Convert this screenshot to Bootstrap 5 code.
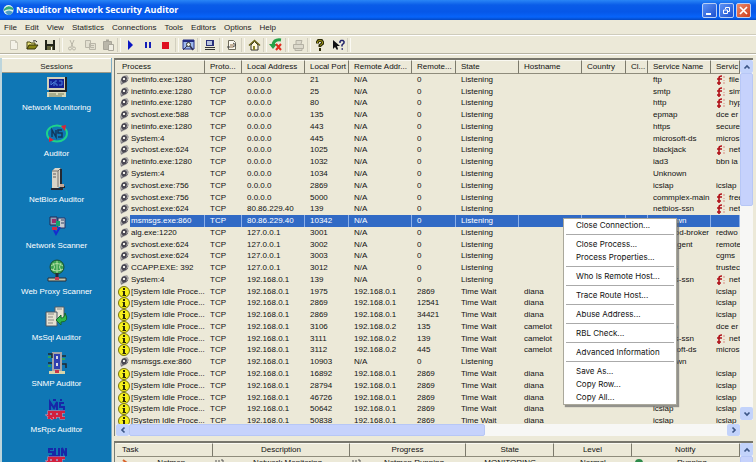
<!DOCTYPE html>
<html lang="en">
<head>
<meta charset="utf-8">
<meta name="viewport" content="width=device-width, initial-scale=1">
<title>Nsauditor Network Security Auditor</title>
<link href="https://cdn.jsdelivr.net/npm/bootstrap@5.3.0/dist/css/bootstrap.min.css" rel="stylesheet">
<style>
:root { --face: #ece9d8; --edge: #86836f; --pick: #316ac5; }
body { font: 8px/11px "Liberation Sans", Arial, sans-serif; color: #111; background: var(--face); }
button { font: inherit; color: inherit; border: 0; background: none; padding: 0; }
svg { display: block; flex: none; }
.titlebar { height: 20px; gap: 2px; padding: 0 5px 0 3px; color: #fff; font: bold 9px/18px "Open Sans", sans-serif; background: linear-gradient(#2a86f6, #0a5ce8 25%, #0657e8 60%, #0764fa 85%, #0348c4); }
.titlebar h1 { font: inherit; margin: 0; }
.win-btn { width: 15px; height: 15px; border: 1px solid #b8cff5; border-radius: 2px; background: linear-gradient(135deg, #5c92f5, #1d50cf); }
.win-close { background: linear-gradient(135deg, #ee8c6c, #cc3c1c); }
.menubar { height: 15px; padding-left: 4px; gap: 8px; border-bottom: 1px solid #cfccbc; }
.menubar a { color: #222; text-decoration: none; line-height: 13px; }
.toolbar { height: 19px; padding-left: 5px; border-top: 1px solid #fff; border-bottom: 1px solid #b6b3a2; }
.tool { width: 18px; height: 16px; display: grid; place-items: center; }
.rule { width: 4px; height: 14px; border-left: 1px solid #d2cfbf; border-right: 1px solid #faf9f3; background: var(--face); }
.workspace { padding: 3px 3px 0 0; border-top: 1px solid #fff; min-height: 0; }
.sidebar { width: 112px; background: #0f77b5; border-left: 2px solid #bcd5dc; border-right: 1px solid #7facc4; }
.sidebar h2 { font: inherit; margin: 0 0 2px; height: 15px; line-height: 15px; text-align: center; background: var(--face); border-top: 1px solid #fff; border-bottom: 1px solid #9b9987; color: #222; }
.session { height: 46px; color: #fff; text-decoration: none; }
.session svg { margin-bottom: 3px; }
.panes { display: grid; grid-template-rows: minmax(0, 1fr) 21px; gap: 5px; margin-left: 2px; }
.pane { border-left: 1px solid #777e78; border-top: 2px solid #77766c; padding-left: 2px; background: var(--face); position: relative; min-height: 0; }
.list-side { min-width: 0; }
.list-view { min-height: 0; }
.grid-table { width: 100%; table-layout: fixed; border-collapse: separate; border-spacing: 0; }
.grid-table th, .grid-table td { padding: 0 0 0 5px; overflow: hidden; white-space: nowrap; text-align: left; font-weight: normal; line-height: 10px; height: 10px; vertical-align: middle; }
.grid-table th { height: 14px; border-right: 1px solid #7c7a6c; border-bottom: 1px solid #8f8c7c; border-top: 1px solid #faf9f2; }
.connections { height: calc(100% + 3px); }
.connections td:first-child { padding-left: 1px; }
.proc { display: flex; align-items: center; height: 10px; }
.proc svg { margin-right: 1px; }
.proc span { flex: 1; }
.picked td { background: var(--pick); color: #fff; border-right: 1px solid #8cb0e8; }
.picked td:first-child { background: linear-gradient(90deg, var(--face) 13px, var(--pick) 13px); }
.svc { display: flex; align-items: center; gap: 4px; }
.scroll-v { width: 13px; background: #f7f7f5; }
.scroll-h { height: 12px; background: #f7f7f5; margin-left: -1px; }
.arrow { width: 13px; height: 13px; border-radius: 2px; background: #c3d3fb; display: grid; place-items: center; flex: none; }
.scroll-h .arrow { height: 12px; }
.to-left { rotate: -90deg; }
.to-right { rotate: 90deg; }
.to-bottom { rotate: 180deg; }
.thumb { background: #c6d2fc; border: 1px solid #b7c7f6; border-radius: 2px; }
.popup { position: absolute; left: 448px; top: 158px; width: 114px; background: #fff; border: 1px solid #aaa89b; box-shadow: 2px 2px 1px #666a; font: 8px/13px Inter, sans-serif; z-index: 3; }
.popup button { display: block; width: 100%; height: 13px; padding-left: 12px; text-align: left; color: #111; }
.popup hr { margin: 2px 2px 3px; border: 0; border-top: 1px solid #aaa; opacity: 1; }
.tasks th, .tasks td { text-align: center; padding: 0; }
.tasks th:first-child { text-align: left; padding-left: 5px; }
.tasks td { height: 12px; }
.tasks td > div { display: flex; align-items: center; }
.tasks td span { flex: 1; }
</style>
<script src="https://cdn.jsdelivr.net/npm/bootstrap@5.3.0/dist/js/bootstrap.bundle.min.js"></script>
</head>
<body class="vh-100 overflow-hidden d-flex flex-column">
<svg width="0" height="0" class="position-absolute" aria-hidden="true">
  <symbol id="gear" viewBox="0 0 12 12"><path d="M3 5 5 2l4-1 2 3-2 4-4 2-2 1-1-3Z" fill="#a5a3a3"/><path d="M4 3 7 2l2 2-1 4-3 1-2-3Z" fill="#4a4853"/><path d="M5 4h2v2H5Z" fill="#f0eee8"/><path d="M8 8l2-2M3 10l2-1" stroke="#77747c"/></symbol>
  <symbol id="info" viewBox="0 0 12 12"><circle cx="6" cy="6" r="5.500" fill="#f6f01c" stroke="#77740c"/><path d="M5 2h2v2H5ZM4.500 5H7v4h1v1H4.500V9H5V6h-.5Z" fill="#2b2a08"/></symbol>
  <symbol id="flag" viewBox="0 0 9 10"><path d="M3 10V3q0-2 3-2M1 4h5M1 8h4" stroke="#b01018" stroke-width="1.600" fill="none"/><path d="M8 1v2M8 5v1M7 8h2" stroke="#d98a80"/></symbol>
  <symbol id="up" viewBox="0 0 8 8"><path d="M1.500 5.500 4 3l2.500 2.500" fill="none" stroke="#3c5687" stroke-width="1.700"/></symbol>
</svg>

<header class="titlebar d-flex align-items-center flex-shrink-0">
  <svg width="11" height="12" viewBox="0 0 11 12"><circle cx="5.500" cy="6" r="5" fill="#e3f5ef"/><path d="M1 5q4-5 9-1v2q-5-2-9 1Z" fill="#35ad79"/><path d="M2 8q4-3 8 0-2 4-5 3Z" fill="#4b9bc5"/></svg>
  <h1 class="flex-grow-1">Nsauditor Network Security Auditor</h1>
  <button class="win-btn" aria-label="Minimize"><svg width="13" height="13"><path d="M3 9h5v2H3Z" fill="#fff"/></svg></button>
  <button class="win-btn" aria-label="Restore"><svg width="13" height="13" fill="none" stroke="#fff"><path d="M5.500 5V3.500h4v4H8M3.500 6h4v3.500h-4Z"/></svg></button>
  <button class="win-btn win-close" aria-label="Close"><svg width="13" height="13"><path d="m3 3 7 7m0-7-7 7" stroke="#fff" stroke-width="1.700"/></svg></button>
</header>

<nav class="menubar d-flex align-items-center flex-shrink-0">
  <a href="#">File</a><a href="#">Edit</a><a href="#">View</a><a href="#">Statistics</a><a href="#">Connections</a><a href="#">Tools</a><a href="#">Editors</a><a href="#">Options</a><a href="#">Help</a>
</nav>

<div class="toolbar d-flex align-items-center flex-shrink-0" role="toolbar" aria-label="Main">
  <button class="tool" aria-label="New"><svg width="12" height="12"><path d="M2.500 1.500h5l2 2v7h-7ZM7.500 1.500v2h2" fill="#f4f2e8" stroke="#c9c6b8"/></svg></button>
  <button class="tool" aria-label="Open"><svg width="13" height="12"><path d="M1 10V3h3l1 1h4v2" fill="#e8e17a" stroke="#45430d"/><path d="m1 10 2-4h9l-3 4Z" fill="#8a8613" stroke="#33310a"/><path d="M7 2q3-1 4 1" stroke="#222" fill="none"/></svg></button>
  <button class="tool" aria-label="Save"><svg width="12" height="12"><path d="M1 1h10v10H1Z" fill="#22241a"/><path d="M3 1h6v4H3Z" fill="#d9d8c2"/><path d="M3 7h6v4H3Z" fill="#66673f"/><path d="M7 8h1v3H7Z" fill="#fff"/></svg></button>
  <span class="rule"></span>
  <button class="tool" aria-label="Cut"><svg width="12" height="12" fill="none" stroke="#b9b6a8"><path d="m4 1 3 7M8 1 5 8"/><circle cx="4" cy="9.500" r="1.500"/><circle cx="8" cy="9.500" r="1.500"/></svg></button>
  <button class="tool" aria-label="Copy"><svg width="13" height="12" fill="#e2dfd0" stroke="#b9b6a8"><path d="M1.500 1.500h5v7h-5ZM5.500 4.500h6v6h-6ZM7 6.500h3M7 8.500h3"/></svg></button>
  <button class="tool" aria-label="Paste"><svg width="13" height="12" stroke="#a9a69a"><path d="M1.500 2.500h8v8h-8Z" fill="#bab7aa"/><path d="M4 1.500h3" stroke-width="2"/><path d="M6.500 5.500h5v6h-5Z" fill="#efede2"/></svg></button>
  <span class="rule"></span>
  <button class="tool" aria-label="Start"><svg width="10" height="12"><path d="M3 1v10l5-5Z" fill="#0a16c4"/></svg></button>
  <button class="tool" aria-label="Pause"><svg width="10" height="12"><path d="M2 3h2v6H2ZM6 3h2v6H6Z" fill="#141fb8"/></svg></button>
  <button class="tool" aria-label="Stop"><svg width="10" height="12"><path d="M1 3h7v7H1Z" fill="#df1020"/></svg></button>
  <span class="rule"></span>
  <button class="tool" aria-label="Find session"><svg width="13" height="12"><path d="M1 1h11v9H1Z" fill="#9db8ec" stroke="#232c85"/><path d="M1 1h11v2H1Z" fill="#232c85"/><circle cx="6.500" cy="5.500" r="2" fill="#e6ebdf" stroke="#333"/><path d="m8 7 3 4" stroke="#303050" stroke-width="1.500"/><path d="m5 7-4 4" stroke="#303050"/></svg></button>
  <span class="rule"></span>
  <button class="tool" aria-label="Monitor"><svg width="12" height="12"><path d="M2 1h8v6H2Z" fill="#2b317b"/><path d="M3 2h5v4H3Z" fill="#b9c4de"/><path d="M1 8h10v1H1ZM1 10h10v1H1Z" fill="#333"/></svg></button>
  <span class="rule"></span>
  <button class="tool" aria-label="Refresh log"><svg width="12" height="12"><path d="M2.500 1.500h5l2 2v7h-7Z" fill="#fcfaf0" stroke="#6e6b5c"/><path d="M4 6h4M4 8h3" stroke="#8c6a45"/><path d="m7 4 3 2-3 2M1 8h3" stroke="#444" fill="none"/></svg></button>
  <span class="rule"></span>
  <button class="tool" aria-label="Home"><svg width="13" height="12"><path d="M3 6v5h7V6L6.500 2.500Z" fill="#fff7dc" stroke="#333"/><path d="m1 6.500 5.500-5 5.500 5" fill="none" stroke="#6b6417" stroke-width="1.500"/><path d="M5 7h2v4H5Z" fill="#8c842a"/></svg></button>
  <span class="rule"></span>
  <button class="tool" aria-label="Disconnect"><svg width="14" height="13"><path d="M12 2Q5 1 4 7" fill="none" stroke="#24a047" stroke-width="3"/><path d="M0 6h8l-4 5Z" fill="#24a047"/><path d="m7 6 5 6m0-6-5 6" stroke="#df2d20" stroke-width="2"/></svg></button>
  <span class="rule"></span>
  <button class="tool" aria-label="Print"><svg width="13" height="12" fill="#dcd9cb" stroke="#b4b1a4"><path d="M4 5V1.500h6L9 5M1.500 5.500h10v4h-10ZM3 9.500h7v2H3Z"/></svg></button>
  <span class="rule"></span>
  <button class="tool" aria-label="About"><svg width="10" height="12" fill="none"><path d="M2.500 4.500V3l1-1.500h3L7.500 3v1.500L5 6.500V8M4 10.500h2" stroke="#2e2c08" stroke-width="3"/><path d="M2.500 4V3l1-1.300h3L7.500 3v1.500L5 6.500" stroke="#a8a01c"/></svg></button>
  <button class="tool" aria-label="Context help"><svg width="13" height="12"><path d="M1 1v9l2-2 2 3 1-1-1-3h3Z" fill="#111"/><path d="M8 4V2.500L9 1.500h2l1 1V4l-2 2v1.500M9.500 10h1.500" fill="none" stroke="#22236b" stroke-width="1.500"/></svg></button>
  <span class="rule"></span>
</div>

<main class="workspace d-flex flex-grow-1 overflow-hidden">
  <aside class="sidebar flex-shrink-0 overflow-hidden">
    <h2>Sessions</h2>
    <nav class="d-flex flex-column">
      <a class="session d-flex flex-column align-items-center flex-shrink-0" href="#"><svg width="24" height="24" viewBox="0 0 24 24"><path d="M2 2h19v13H2Z" fill="#d2d0b9"/><path d="M21 2v14H4" stroke="#222" stroke-width="2" fill="none"/><path d="M4 4h15v9H4Z" fill="#111f95"/><path d="M6 6v4l3-3v4m3-5h-2v3h2v2m2-5h3v4h-3" stroke="#4a80d8" fill="none"/><path d="M2 17h19v5H2Z" fill="#dad8b9"/><path d="M4 19h7M13 19h6M4 21h13" stroke="#77805e"/></svg>Network Monitoring</a>
      <a class="session d-flex flex-column align-items-center flex-shrink-0" href="#"><svg width="24" height="24" viewBox="0 0 24 24"><ellipse cx="12" cy="12.500" rx="10" ry="8" fill="none" stroke="#1ed38b" stroke-width="2"/><path d="M7 16V9l4 7V9m6 0h-4v3h4v4h-4" fill="none" stroke="#12385d" stroke-width="1.500"/><path d="m16 5 5-1-1 6ZM4 16l5 3-5 2Z" fill="#dc2435"/></svg>Auditor</a>
      <a class="session d-flex flex-column align-items-center flex-shrink-0" href="#"><svg width="24" height="24" viewBox="0 0 24 24"><path d="m7 4 3-3h6v18l-3 2H7Z" fill="#d9d4c8"/><path d="M13 4v16M7 4h6l3-3" stroke="#77716d" fill="none"/><path d="M16 2v18h4M6 22h12" stroke="#242832" stroke-width="2" fill="none"/><path d="M8 7h3M8 10h3" stroke="#5f5d60"/><path d="M15 17h4v3h-4Z" fill="#c3a796"/></svg>NetBios Auditor</a>
      <a class="session d-flex flex-column align-items-center flex-shrink-0" href="#"><svg width="24" height="24" viewBox="0 0 24 24"><path d="M5 4h7v8H5Z" fill="#929eb7" stroke="#222b53"/><path d="M13 5h7v10h-7Z" fill="#c8cbd1" stroke="#263769"/><path d="M7 6h4v4H7Z" fill="#9a2e69"/><path d="M11 8h4v5h-4Z" fill="#13a36b"/><path d="M16 7h3M16 10h3" stroke="#304365"/><path d="m15 14-4 7-2-4" fill="none" stroke="#162bd0" stroke-width="2"/><path d="M7 14h5v3H7Z" fill="#d12b45"/></svg>Network Scanner</a>
      <a class="session d-flex flex-column align-items-center flex-shrink-0" href="#"><svg width="24" height="24" viewBox="0 0 24 24"><circle cx="12" cy="8" r="7" fill="#3aa14f" stroke="#174d38"/><path d="M6 7q6-5 12 0M6 10q6 4 12 0M12 2v12M8 4q3 4 0 8m8-8q-3 4 0 8" stroke="#b1dfa2" fill="none"/><path d="M12 14v5" stroke="#252c35" stroke-width="3"/><path d="M3 19h18v3H3Z" fill="#c3c4aa" stroke="#29313b"/><path d="M10 18h4v3h-4Z" fill="#c63952"/></svg>Web Proxy Scanner</a>
      <a class="session d-flex flex-column align-items-center flex-shrink-0" href="#"><svg width="24" height="24" viewBox="0 0 24 24"><path d="M10 2h9v14h-9Z" fill="#e5e2d4" stroke="#525c65"/><path d="M1 7h11v14H1Z" fill="#e5e0d1" stroke="#485663"/><path d="M3 9h6M3 12h5M3 15h6M3 18h5M12 4h5" stroke="#8b8a83"/><path d="m11 15 5-5v3q4 0 4-5 5 9-4 9v3Z" fill="#31b849" stroke="#16692e"/></svg>MsSql Auditor</a>
      <a class="session d-flex flex-column align-items-center flex-shrink-0" href="#"><svg width="24" height="24" viewBox="0 0 24 24"><path d="M8 2h8v17H8Z" fill="#2f3fb0" stroke="#a5a4a8" stroke-width="2"/><path d="M11 5h2v3h-2ZM11 12h2v3h-2Z" fill="#d7d8e2"/><path d="M3 3h4v4M3 12h4M17 5h4M17 13h4v4" stroke="#202a32" stroke-width="1.500" fill="none"/><path d="M3 6h3M17 8h3M3 15h3" stroke="#30a25b" stroke-width="2"/><path d="M4 20h16v3H4Z" fill="#d8d4a9"/><path d="M10 19h4v3h-4Z" fill="#c93449"/></svg>SNMP Auditor</a>
      <a class="session d-flex flex-column align-items-center flex-shrink-0" href="#"><svg width="24" height="24" viewBox="0 0 24 24" fill="none"><path d="M5 13V5l4 6 3-6v8m7-7h-4v4h4v4h-4M8 3h3M15 3h2" stroke="#1728a8" stroke-width="2"/><path d="M4 22v-7h4v4H4l4 3m2 0v-7h4v4h-4m10-4h-4v6h4" stroke="#e78ca8" stroke-width="3"/><path d="M4 22v-7h4v4H4l4 3m2 0v-7h4v4h-4m10-4h-4v6h4" stroke="#d2203f" stroke-width="2"/></svg>MsRpc Auditor</a>
      <a class="session d-flex flex-column align-items-center flex-shrink-0" href="#"><svg width="24" height="24" viewBox="0 0 24 24" fill="none"><path d="M8 6H4v3h4v4H4m6-8v8h4V5m3 8V5l4 8V5" stroke="#1728a8" stroke-width="2"/><path d="M4 22v-7h4v4H4l4 3m2 0v-7h4v4h-4m10-4h-4v6h4" stroke="#e78ca8" stroke-width="3"/><path d="M4 22v-7h4v4H4l4 3m2 0v-7h4v4h-4m10-4h-4v6h4" stroke="#d2203f" stroke-width="2"/></svg></a>
    </nav>
  </aside>

  <div class="panes flex-grow-1 overflow-hidden">
    <section class="pane d-flex">
      <div class="list-side d-flex flex-column flex-grow-1">
        <div class="list-view flex-grow-1 overflow-hidden">
          <table class="grid-table connections">
            <colgroup id="widths"></colgroup>
            <thead><tr><th>Process</th><th>Proto...</th><th>Local Address</th><th>Local Port</th><th>Remote Addr...</th><th>Remote...</th><th>State</th><th>Hostname</th><th>Country</th><th>Cl...</th><th>Service Name</th><th>Servic</th></tr></thead>
            <tbody id="rows"></tbody>
          </table>
        </div>
        <div class="scroll-h d-flex flex-shrink-0">
          <button class="arrow" aria-label="Scroll left"><svg class="to-left" width="8" height="8"><use href="#up"/></svg></button>
          <div class="thumb" style="width:57%"></div>
          <button class="arrow ms-auto" aria-label="Scroll right"><svg class="to-right" width="8" height="8"><use href="#up"/></svg></button>
        </div>
      </div>
      <div class="scroll-v d-flex flex-column flex-shrink-0 mb-3">
        <button class="arrow" aria-label="Scroll up"><svg width="8" height="8"><use href="#up"/></svg></button>
        <div class="thumb" style="height:37%"></div>
        <button class="arrow mt-auto" aria-label="Scroll down"><svg class="to-bottom" width="8" height="8"><use href="#up"/></svg></button>
      </div>
      <div class="popup" role="menu">
        <button role="menuitem">Close Connection...</button><hr>
        <button role="menuitem">Close Process...</button>
        <button role="menuitem">Process Properties...</button><hr>
        <button role="menuitem">Who Is Remote Host...</button><hr>
        <button role="menuitem">Trace Route Host...</button><hr>
        <button role="menuitem">Abuse Address...</button><hr>
        <button role="menuitem">RBL Check...</button><hr>
        <button role="menuitem">Advanced Information</button><hr>
        <button role="menuitem">Save As...</button>
        <button role="menuitem">Copy Row...</button>
        <button role="menuitem">Copy All...</button>
      </div>
    </section>

    <section class="pane d-flex overflow-hidden">
      <div class="flex-grow-1">
        <table class="grid-table tasks">
          <colgroup id="task-widths"></colgroup>
          <thead><tr><th>Task</th><th>Description</th><th>Progress</th><th>State</th><th>Level</th><th>Notify</th></tr></thead>
          <tbody><tr>
            <td><div><svg width="12" height="10"><path d="M1 5h8M6 2l4 3-4 3" stroke="#d9622b" stroke-width="2" fill="none"/></svg><span>Netmon</span></div></td>
            <td><div><svg width="12" height="10"><path d="M3 2v7M6 2v7M8 2h2v7" stroke="#555" fill="none"/></svg><span>Network Monitoring</span></div></td>
            <td><div><svg width="12" height="10"><path d="M3 2v7M6 2v7M8 2h2v7" stroke="#555" fill="none"/></svg><span>Netmon Running</span></div></td>
            <td>MONITORING</td><td>Normal</td>
            <td><div><svg width="12" height="10"><circle cx="7" cy="5" r="4" fill="#2d8b4b"/></svg><span>Running</span></div></td>
          </tr></tbody>
        </table>
      </div>
      <div class="scroll-v flex-shrink-0">
        <button class="arrow" aria-label="Scroll tasks up"><svg width="8" height="8"><use href="#up"/></svg></button>
        <div class="thumb h-100"></div>
      </div>
    </section>
  </div>
</main>

<script>
const cols = list => list.map(w => `<col style="width:${w}px">`).join('');
document.getElementById('widths').innerHTML = cols([88, 37, 63, 44, 63, 44, 63, 63, 44, 22, 63, 29]);
document.getElementById('task-widths').innerHTML = cols([96, 136, 116, 88, 77, 108]);
const idle = '[System Idle Proce...';
// process, local address, local port, remote address, remote port, state, host, service, description (* = flagged)
const data = [
  ['inetinfo.exe:1280','0.0.0.0','21','N/A','0','Listening','','ftp','*file'],
  ['inetinfo.exe:1280','0.0.0.0','25','N/A','0','Listening','','smtp','*sim'],
  ['inetinfo.exe:1280','0.0.0.0','80','N/A','0','Listening','','http','*hyp'],
  ['svchost.exe:588','0.0.0.0','135','N/A','0','Listening','','epmap','dce er'],
  ['inetinfo.exe:1280','0.0.0.0','443','N/A','0','Listening','','https','secure'],
  ['System:4','0.0.0.0','445','N/A','0','Listening','','microsoft-ds','micros'],
  ['svchost.exe:624','0.0.0.0','1025','N/A','0','Listening','','blackjack','*net'],
  ['inetinfo.exe:1280','0.0.0.0','1032','N/A','0','Listening','','iad3','bbn ia'],
  ['System:4','0.0.0.0','1034','N/A','0','Listening','','Unknown',''],
  ['svchost.exe:756','0.0.0.0','2869','N/A','0','Listening','','icslap','icslap'],
  ['svchost.exe:756','0.0.0.0','5000','N/A','0','Listening','','commplex-main','*free'],
  ['svchost.exe:624','80.86.229.40','139','N/A','0','Listening','','netbios-ssn','*net'],
  ['msmsgs.exe:860','80.86.229.40','10342','N/A','0','Listening','','Unknown',''],
  ['alg.exe:1220','127.0.0.1','3001','N/A','0','Listening','','redwood-broker','redwo'],
  ['svchost.exe:624','127.0.0.1','3002','N/A','0','Listening','','exlm-agent','remote'],
  ['svchost.exe:624','127.0.0.1','3003','N/A','0','Listening','','cgms','cgms'],
  ['CCAPP.EXE: 392','127.0.0.1','3012','N/A','0','Listening','','twsdss','trustec'],
  ['System:4','192.168.0.1','139','N/A','0','Listening','','netbios-ssn','*net'],
  [idle,'192.168.0.1','1975','192.168.0.1','2869','Time Wait','diana','icslap','icslap'],
  [idle,'192.168.0.1','2869','192.168.0.1','12541','Time Wait','diana','icslap','icslap'],
  [idle,'192.168.0.1','2869','192.168.0.1','34421','Time Wait','diana','icslap','icslap'],
  [idle,'192.168.0.1','3106','192.168.0.2','135','Time Wait','camelot','epmap','dce er'],
  [idle,'192.168.0.1','3111','192.168.0.2','139','Time Wait','camelot','netbios-ssn','*net'],
  [idle,'192.168.0.1','3112','192.168.0.2','445','Time Wait','camelot','microsoft-ds','micros'],
  ['msmsgs.exe:860','192.168.0.1','10903','N/A','0','Listening','','Unknown',''],
  [idle,'192.168.0.1','16892','192.168.0.1','2869','Time Wait','diana','icslap','icslap'],
  [idle,'192.168.0.1','28794','192.168.0.1','2869','Time Wait','diana','icslap','icslap'],
  [idle,'192.168.0.1','46726','192.168.0.1','2869','Time Wait','diana','icslap','icslap'],
  [idle,'192.168.0.1','50642','192.168.0.1','2869','Time Wait','diana','icslap','icslap'],
  [idle,'192.168.0.1','50838','192.168.0.1','2869','Time Wait','diana','icslap','icslap']
];
document.getElementById('rows').innerHTML = data.map((r, i) => {
  const [p, la, lp, ra, rp, st, host, svc, d] = r;
  const name = p === idle ? 'info' : 'gear';
  const desc = d[0] === '*' ? `<div class="svc"><svg width="9" height="10"><use href="#flag"/></svg>${d.slice(1)}</div>` : d;
  return `<tr${i === 12 ? ' class="picked"' : ''}><td><div class="proc"><svg width="12" height="12"><use href="#${name}"/></svg><span>${p}</span></div></td>` +
    ['TCP', la, lp, ra, rp, st, host, '', '', svc, desc].map(t => `<td>${t}</td>`).join('') + '</tr>';
}).join('');
</script>
</body>
</html>
